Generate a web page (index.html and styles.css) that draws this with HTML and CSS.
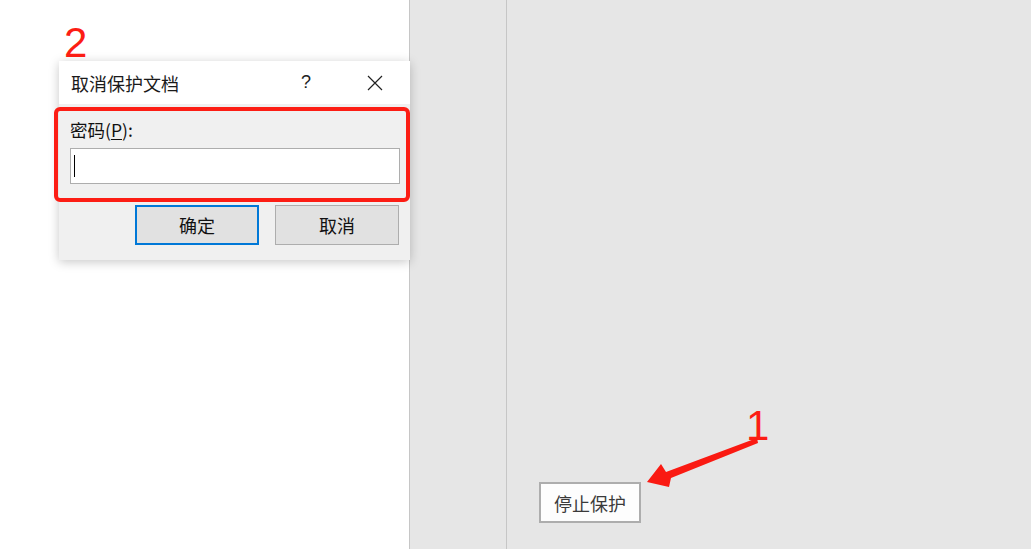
FILE: index.html
```html
<!DOCTYPE html>
<html lang="zh">
<head>
<meta charset="utf-8">
<link rel="stylesheet" href="styles.css">
</head>
<body>
<div class="screen">
  <div class="page"></div>
  <div class="gutter"></div>
  <div class="pane">
    <button class="stop-btn">停止保护</button>
  </div>

  <div class="dialog">
    <div class="titlebar">
      <span class="title">取消保护文档</span>
      <span class="help">?</span>
      <span class="close">
        <svg width="16" height="16" viewBox="0 0 16 16"><path d="M1 1L15 15M15 1L1 15" stroke="#222" stroke-width="1.2" fill="none"/></svg>
      </span>
    </div>
    <div class="body">
      <label class="label">密码(<u>P</u>):</label>
      <div class="input"><span class="caret"></span></div>
      <div class="buttons">
        <button class="btn primary">确定</button>
        <button class="btn">取消</button>
      </div>
    </div>
  </div>

  <div class="highlight"></div>
  <div class="num num-2">2</div>
  <div class="num num-1">1</div>
  <svg class="arrow" width="1031" height="549" viewBox="0 0 1031 549">
    <polygon points="757,438 666,472 661,464 647,482 669,487 671,478 758,443" fill="#fa1a12"/>
  </svg>
</div>
</body>
</html>
```
FILE: styles.css
```css
* { box-sizing: border-box; }
html, body { margin: 0; padding: 0; }
body {
  width: 1031px;
  height: 549px;
  overflow: hidden;
  font-family: "Noto Sans CJK SC", "Microsoft YaHei", sans-serif;
}
.screen {
  position: relative;
  width: 1031px;
  height: 549px;
  display: flex;
}
.page {
  flex: none;
  width: 410px;
  background: #ffffff;
  border-right: 1px solid #c6c6c6;
}
.gutter {
  width: 97px;
  flex: none;
  background: #e6e6e6;
  border-right: 1px solid #c6c6c6;
}
.pane {
  flex: 1;
  background: #e6e6e6;
  padding: 482px 0 0 32px;
}
.stop-btn {
  width: 102px;
  height: 41px;
  border: 2px solid #adadad;
  background: #fdfdfd;
  color: #3a3a3a;
  font-family: inherit;
  font-size: 18px;
  padding: 0;
  line-height: 36px;
}
.dialog {
  position: absolute;
  left: 59px;
  top: 61px;
  width: 351px;
  height: 199px;
  background: #f0f0f0;
  box-shadow: 0 2px 10px rgba(0,0,0,0.22);
  display: flex;
  flex-direction: column;
}
.titlebar {
  height: 43px;
  background: #ffffff;
  display: flex;
  align-items: center;
  padding-left: 12px;
  color: #1a1a1a;
}
.title {
  font-size: 18px;
  flex: 1;
}
.help {
  font-family: "Liberation Sans", sans-serif;
  font-size: 18px;
  width: 20px;
  margin-right: 46px;
  color: #222;
}
.close {
  width: 16px;
  height: 16px;
  margin-right: 27px;
  display: flex;
}
.body {
  flex: 1;
  padding: 14px 11px 0 11px;
  display: flex;
  flex-direction: column;
}
.label {
  font-size: 17.5px;
  color: #111;
  line-height: 24px;
  height: 24px;
}
.label u { text-decoration-thickness: 1px; text-underline-offset: 2px; }
.input {
  margin-top: 6px;
  width: 330px;
  height: 36px;
  background: #fff;
  border: 1px solid #adadad;
  padding: 6px 0 0 3px;
}
.caret {
  display: block;
  width: 1px;
  height: 22px;
  background: #000;
}
.buttons {
  margin-top: 21px;
  display: flex;
  justify-content: flex-end;
  gap: 16px;
}
.btn {
  width: 124px;
  height: 40px;
  background: #e1e1e1;
  border: 1px solid #adadad;
  font-family: inherit;
  font-size: 18px;
  color: #111;
  padding: 0;
}
.btn.primary {
  border: 2px solid #0078d7;
}
.highlight {
  position: absolute;
  left: 54px;
  top: 107px;
  width: 356px;
  height: 95px;
  border: 4px solid #fc1d14;
  border-radius: 6px;
}
.num {
  position: absolute;
  font-family: "Liberation Sans", sans-serif;
  font-size: 42px;
  line-height: 42px;
  color: #fc1d14;
}
.num-2 { left: 64px; top: 22px; }
.num-1 { left: 746px; top: 405px; }
.arrow {
  position: absolute;
  left: 0;
  top: 0;
  pointer-events: none;
}
```
